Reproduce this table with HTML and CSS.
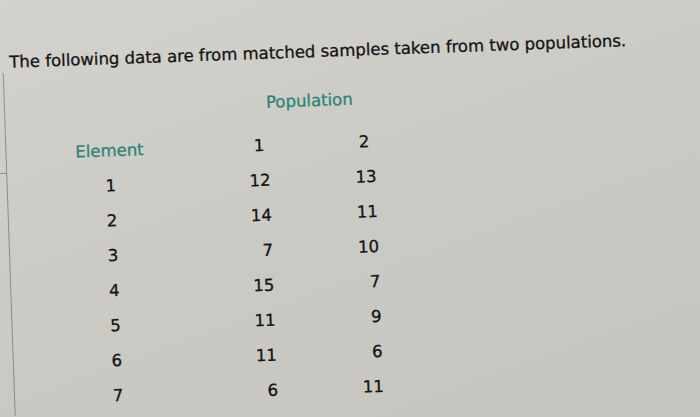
FILE: index.html
```html
<!DOCTYPE html>
<html>
<head>
<meta charset="utf-8">
<link rel="stylesheet" href="styles.css">
</head>
<body>
<div class="sheet">
  <p class="intro">The following data are from matched samples taken from two populations.</p>
  <div class="panel">
    <div class="grid">
      <div class="blank"></div>
      <div class="pop">Population</div>
      <div class="hd el">Element</div>
      <div class="hd c1">1</div>
      <div class="hd c2">2</div>

      <div class="el">1</div><div class="c1">12</div><div class="c2">13</div>
      <div class="el">2</div><div class="c1">14</div><div class="c2">11</div>
      <div class="el">3</div><div class="c1">7</div><div class="c2">10</div>
      <div class="el">4</div><div class="c1">15</div><div class="c2">7</div>
      <div class="el">5</div><div class="c1">11</div><div class="c2">9</div>
      <div class="el">6</div><div class="c1">11</div><div class="c2">6</div>
      <div class="el">7</div><div class="c1">6</div><div class="c2">11</div>
    </div>
  </div>
</div>
</body>
</html>
```

FILE: styles.css
```css
html, body {
  margin: 0;
  height: 100%;
  overflow: hidden;
}
body {
  font-family: "DejaVu Sans", Verdana, sans-serif;
  color: #141414;
  background: linear-gradient(160deg, #d3d2cd 0%, #cbcac5 45%, #c5c4bf 100%);
  padding-top: 24px;
  box-sizing: border-box;
}
.sheet {
  transform: rotate(-2deg);
  transform-origin: 0 0;
  padding-top: 29px;
  width: 640px;
  height: 392px;
  box-sizing: border-box;
  position: relative;
  -webkit-text-stroke: 0.3px currentColor;
}
.intro {
  margin: 0 0 0 8px;
  font-size: 16.5px;
  line-height: 20px;
  white-space: nowrap;
}
.panel {
  margin-left: 1px;
  border-left: 1px solid #8d8c88;
  padding-top: 29px;
  height: 343px;
  box-sizing: border-box;
  position: relative;
}
.panel::before {
  content: "";
  position: absolute;
  left: -9px;
  top: 100px;
  width: 8px;
  border-top: 1px solid #8d8c88;
}
.grid {
  display: grid;
  grid-template-columns: 206px 57px 106px;
  grid-auto-rows: 35px;
  font-size: 16.5px;
  line-height: 35px;
}
.blank {
  grid-column: 1;
  grid-row: 1;
}
.pop {
  grid-column: 2 / 4;
  grid-row: 1;
  color: #2b8577;
  line-height: 20px;
  height: 20px;
  padding-left: 34px;
  text-align: center;
  margin-bottom: 12px;
}
.el { grid-column: 1; text-align: center; }
.c1 { grid-column: 2; text-align: right; }
.c2 { grid-column: 3; text-align: right; }
.hd.el { color: #2b8577; }
.hd.c1 { padding-right: 5px; }
.hd.c2 { padding-right: 6px; }
```
